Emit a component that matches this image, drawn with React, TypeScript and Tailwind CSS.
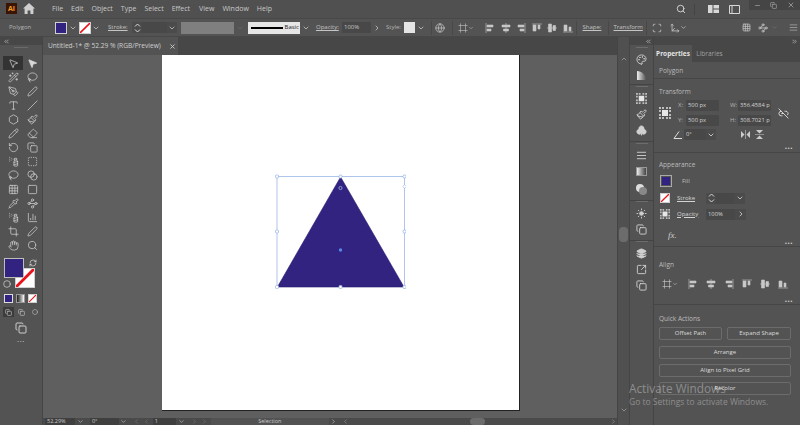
import {
  ChevronDown, ChevronRight, ChevronLeft, ChevronUp, ChevronsLeft, ChevronsRight, Search, X, Minus,
  MousePointer2, WandSparkles, Lasso, PenTool, Pen, Type, Slash, Hexagon, Paintbrush, Pencil, Eraser,
  RotateCcw, Copy, SprayCan, Grid3x3, Pipette, Blend, ChartColumn, Crop, Hand, Palette, Club, Sun,
  Layers, SquareArrowOutUpRight, Link2Off, Globe, Square, Waypoints, BoxSelect, Scan, Move3d, Frame,
  AlignJustify, Circle, RefreshCw,
} from "lucide-react"
import type { ReactNode } from "react"

const font = "font-['Open_Sans',sans-serif]"

function AlignIcons({ gap }: { gap: string }) {
  const bars = [
    <path key="a" d="M2 1v10M3 3h6v2H3zM3 7h4v2H3z" />,
    <path key="b" d="M6 1v10M2 3h8v2H2zM3.5 7h5v2h-5z" />,
    <path key="c" d="M10 1v10M3 3h6v2H3zM5 7h4v2H5z" />,
    <path key="d" d="M1 2h10M2 3h3v6H2zM7 3h2v4H7z" />,
    <path key="e" d="M1 6h10M2.5 2h3v8h-3zM7 3.5h2.5v5H7z" />,
    <path key="f" d="M1 10h10M2 3h3v6H2zM7 5h2v4H7z" />,
  ]
  return (
    <div className={`flex items-center ${gap}`}>
      {bars.map((b) => (
        <svg key={b.key} width="12" height="12" viewBox="0 0 12 12" fill="#c8c8c8" stroke="#c8c8c8" strokeWidth="0.6">{b}</svg>
      ))}
    </div>
  )
}

function Swatch({ none, size = "w-3 h-3" }: { none?: boolean; size?: string }) {
  return (
    <div className={`${size} shrink-0 border border-[#cfcfcf] ${none ? "bg-white" : "bg-[#31237f]"} relative overflow-hidden`}>
      {none && (
        <svg className="w-full h-full" viewBox="0 0 10 10">
          <path d="M0 10L10 0" stroke="#e8141c" strokeWidth="1.6" />
        </svg>
      )}
    </div>
  )
}

function Stepper() {
  return (
    <div className="w-[10px] h-[11px] flex items-center justify-center bg-[#4b4b4b] rounded-l-[1px]">
      <svg width="7" height="10" viewBox="0 0 7 10" fill="none" stroke="#d8d8d8"><path d="M1 3.5L3.5 1 6 3.5M1 6.5L3.5 9 6 6.5" /></svg>
    </div>
  )
}

function RefPoint({ size }: { size: number }) {
  return (
    <svg width={size} height={size} viewBox="0 0 12 12" className="shrink-0" fill="#bdbdbd">
      <path d="M0 0h2v2H0zM3 0h2v2H3zM7 0h2v2H7zM10 0h2v2h-2zM0 3h2v2H0zM10 3h2v2h-2zM0 7h2v2H0zM10 7h2v2h-2zM0 10h2v2H0zM3 10h2v2H3zM7 10h2v2H7zM10 10h2v2h-2z" />
      <path d="M3 3h6v6H3z" fill="#e8e8e8" />
    </svg>
  )
}

function MenuBar() {
  const items = [["File", "ml-[52px]"], ["Edit", "ml-[8px]"], ["Object", "ml-[8px]"], ["Type", "ml-[8px]"], ["Select", "ml-[8px]"], ["Effect", "ml-[8px]"], ["View", "ml-[9px]"], ["Window", "ml-[8px]"], ["Help", "ml-[8px]"]]
  return (
    <div className="h-[18px] shrink-0 bg-[#505050] flex items-center relative text-[#c8c8c8] text-[7px]">
      <div className="absolute left-[6px] top-[3px] w-[11px] h-[11px] bg-[#3a1505] text-[#f59a2c] text-[7px] font-bold flex items-center justify-center leading-none">Ai</div>
      <svg className="absolute left-[23px] top-[3px]" width="12" height="11" viewBox="0 0 12 11" fill="#cfcfcf"><path d="M6 0L0 5.5h1.6V11h3V7.5h2.8V11h3V5.5H12z" /></svg>
      {items.map(([t, c]) => <span key={t} className={c}>{t}</span>)}
      <div className="ml-auto flex items-center self-stretch">
        <Search size={10} className="text-[#d8d8d8] mr-[8px]" strokeWidth={2.2} />
        <div className="w-px h-[11px] bg-[#444] mr-[13px]" />
        <svg className="mr-[10px]" width="11" height="8" viewBox="0 0 11 8" fill="#d8d8d8"><path d="M0 0h4.5v8H0zM5.5 0H11v3.5H5.5zM5.5 4.5H11V8H5.5z" /></svg>
        <svg className="mr-[9px]" width="11" height="9" viewBox="0 0 11 9" fill="none" stroke="#d8d8d8"><path d="M.5.5h10v8H.5zM3 .5v8" /></svg>
        <div className="self-start h-[10px] w-[51px] bg-[#454545] flex items-center justify-around text-[#b4b4b4]">
          <Minus size={7} />
          <Copy size={7} />
          <X size={8} />
        </div>
      </div>
    </div>
  )
}

function ControlBar() {
  return (
    <div className="h-[19px] shrink-0 bg-[#535353] border-y border-[#484848] flex items-center text-[#c4c4c4] text-[6px] relative">
      <span className="ml-[9px] w-[46px] text-[#b4b4b4]">Polygon</span>
      <Swatch />
      <ChevronDown size={8} strokeWidth={2.4} className="ml-[2px]" />
      <div className="ml-[2px]"><Swatch none /></div>
      <ChevronDown size={8} strokeWidth={2.4} className="ml-[1px]" />
      <span className="ml-[8px] w-[20px] underline">Stroke:</span>
      <div className="ml-[4px]"><Stepper /></div>
      <div className="w-[25px] h-[11px] bg-[#484848]" />
      <div className="w-[10px] h-[11px] bg-[#4b4b4b] flex items-center justify-center"><ChevronDown size={8} strokeWidth={2.4} /></div>
      <div className="ml-[4px] w-[53px] h-[12px] bg-[#7f7f7f]" />
      <ChevronDown size={8} className="ml-[2px] text-[#6d6d6d]" />
      <div className="ml-[4px] w-[52px] h-[12px] bg-[#e6e6e6] flex items-center text-[#222] pr-[1px]">
        <div className="flex-1 h-[2px] bg-black ml-[3px] mr-[2px]" />
        <span>Basic</span>
      </div>
      <ChevronDown size={8} strokeWidth={2.4} className="ml-[2px]" />
      <span className="ml-[6px] underline w-[26px]">Opacity:</span>
      <div className="w-[29px] h-[11px] bg-[#484848] pl-[2px] leading-[11px]">100%</div>
      <ChevronRight size={8} strokeWidth={2.4} className="ml-[2px]" />
      <span className="ml-[5px] w-[18px] text-[#b4b4b4]">Style:</span>
      <div className="w-[11px] h-[11px] bg-[#e4e4e4]" />
      <ChevronDown size={8} strokeWidth={2.4} className="ml-[2px]" />
      <div className="w-px h-[14px] bg-[#484848] ml-[6px]" />
      <Globe size={10} className="ml-[3px] text-[#bbb]" />
      <div className="w-px h-[14px] bg-[#484848] ml-[7px]" />
      <Frame size={10} className="ml-[5px]" strokeWidth={1.4} />
      <ChevronDown size={6} className="mr-[10px]" />
      <AlignIcons gap="gap-[3.5px]" />
      <div className="w-px h-[14px] bg-[#484848] ml-[2px]" />
      <span className="ml-[6px] w-[20px] underline">Shape:</span>
      <div className="w-px h-[14px] bg-[#484848] ml-[5px]" />
      <span className="ml-[5px] w-[28px] underline">Transform</span>
      <div className="w-px h-[14px] bg-[#484848] ml-[4px]" />
      <Scan size={10} className="ml-[5px]" />
      <Move3d size={10} className="ml-[8px]" />
      <ChevronDown size={7} strokeWidth={2.4} />
      <Grid3x3 size={9} className="ml-[55px]" />
      <Waypoints size={10} className="ml-[7px]" />
      <ChevronDown size={7} className="ml-[3px] text-[#777]" />
      <AlignJustify size={9} className="ml-[11px] text-[#aaa]" />
    </div>
  )
}

const tools = [
  MousePointer2, MousePointer2, WandSparkles, Lasso, PenTool, Pen, Type, Slash, Hexagon, Paintbrush,
  Pencil, Eraser, RotateCcw, Copy, SprayCan, BoxSelect, Lasso, Blend, Grid3x3, Square, Pipette, Waypoints,
  SprayCan, ChartColumn, Crop, Pen, Hand, Search,
]

function Toolbar() {
  return (
    <div className="w-[43px] shrink-0 bg-[#535353] border-r border-[#444] flex flex-col">
      <div className="h-[8px] bg-[#474747] flex items-center pl-[3px] text-[#cfcfcf]"><ChevronsLeft size={7} /></div>
      <div className="h-px w-[14px] bg-[#6a6a6a] mx-auto mt-[2px] mb-[8px]" />
      <div className="grid grid-cols-[20px_18px] auto-rows-[14px] ml-[3px] text-[#d0d0d0]">
        {tools.map((T, i) => (
          <div key={i} className={`flex items-center justify-center ${i === 0 ? "bg-[#333]" : ""}`}>
            <T size={11} strokeWidth={1.6} fill={i === 1 ? "#d8d8d8" : "none"} />
          </div>
        ))}
      </div>
      <div className="relative h-[34px] mt-[4px] mb-[4px] shrink-0">
        <div className="absolute left-[15px] top-[12px]">
          <Swatch none size="w-[20px] h-[20px]" />
        </div>
        <div className="absolute left-[4px] top-[2px] w-[20px] h-[20px] bg-[#31237f] border border-[#bdbdbd]" />
        <RefreshCw size={8} className="absolute left-[29px] top-[3px] text-[#ddd]" />
        <Circle size={8} className="absolute left-[3px] top-[24px] text-[#ddd]" />
      </div>
      <div className="flex gap-[3px] ml-[4px]">
        <div className="w-[9px] h-[9px] bg-[#31237f] border border-[#ddd]" />
        <div className="w-[9px] h-[9px] bg-gradient-to-r from-[#222] to-white border border-[#999]" />
        <Swatch none size="w-[9px] h-[9px]" />
      </div>
      <div className="flex gap-[2px] ml-[3px] mt-[4px] text-[#ccc]">
        <div className="w-[11px] h-[10px] bg-[#3c3c3c] flex items-center justify-center"><Copy size={7} /></div>
        <div className="w-[11px] h-[10px] flex items-center justify-center"><Copy size={7} /></div>
        <div className="w-[11px] h-[10px] flex items-center justify-center"><Circle size={6} /></div>
      </div>
      <Copy size={12} className="mx-auto mt-[5px] text-[#cfcfcf]" />
      <div className="text-[#cfcfcf] text-[8px] leading-none text-center mt-[1px] tracking-[0.5px]">...</div>
    </div>
  )
}

function Handle({ x, y }: { x: number; y: number }) {
  return <rect x={x - 1.5} y={y - 1.5} width="3" height="3" fill="white" stroke="#9db7e6" strokeWidth="0.8" rx="1" />
}

function Canvas() {
  return (
    <div className="flex-1 min-w-0 flex flex-col bg-[#5f5f5f]">
      <div className="h-[18px] shrink-0 bg-[#474747] flex items-end">
        <div className="ml-0 w-[135px] h-[18px] bg-[#535353] flex items-center text-[#d0d0d0] text-[6.6px] pl-[5px]">
          <span>Untitled-1* @ 52.29 % (RGB/Preview)</span>
          <X size={7} strokeWidth={3} className="ml-auto mr-[2px]" />
        </div>
      </div>
      <div className="flex-1 min-h-0">
        <div className="ml-[119px] w-[358px] h-[356px] bg-white border-r border-b border-[#222] pt-[116px] pl-[108px]">
          <svg width="136" height="122" viewBox="270 171 136 122" className="block">
            <rect x="277" y="176.5" width="127.5" height="110" fill="none" stroke="#9db7e6" strokeWidth="0.8" />
            <path d="M340.6 177L404 287H277.4Z" fill="#31237f" stroke="#241a70" strokeWidth="0.6" />
            <circle cx="340.5" cy="188" r="1.6" fill="#31237f" stroke="#9db7e6" strokeWidth="0.8" />
            <circle cx="340.5" cy="250" r="1.7" fill="#5a86e8" />
            <path d="M404.5 184.5l1.7 2-1.7 2-1.7-2z" fill="white" stroke="#9db7e6" strokeWidth="0.6" />
            <Handle x={277} y={176.5} />
            <Handle x={340.5} y={176.5} />
            <Handle x={404.5} y={176.5} />
            <Handle x={277} y={231.5} />
            <Handle x={404.5} y={231.5} />
            <Handle x={277} y={287} />
            <Handle x={340.5} y={287} />
            <Handle x={404.5} y={287} />
          </svg>
        </div>
      </div>
      <StatusBar />
    </div>
  )
}

function StatusBar() {
  return (
    <div className="h-[7px] shrink-0 bg-[#4a4a4a] flex items-start text-[#c8c8c8] text-[5.5px] leading-[7px] overflow-hidden">
      <div className="ml-[2px] w-[30px] h-[7px] bg-[#3f3f3f] pl-[2px]">52.29%</div>
      <ChevronDown size={7} className="ml-[2px]" />
      <div className="ml-[6px] w-[29px] h-[7px] bg-[#3f3f3f] pl-[2px]">0°</div>
      <ChevronDown size={7} className="ml-[1px]" />
      <ChevronLeft size={7} className="ml-[6px] text-[#777]" />
      <ChevronLeft size={7} className="ml-[3px] text-[#777]" />
      <div className="ml-[3px] w-[23px] h-[7px] bg-[#3f3f3f] pl-[2px]">1</div>
      <ChevronDown size={7} className="ml-[2px]" />
      <ChevronRight size={7} className="ml-[6px] text-[#777]" />
      <ChevronRight size={7} className="ml-[3px] text-[#777]" />
      <div className="ml-[3px] w-[119px] text-center bg-[#525252] h-[7px]">Selection</div>
      <ChevronRight size={7} className="ml-[1px]" />
      <ChevronLeft size={7} className="ml-[5px] text-[#999]" />
      <div className="ml-[121px] w-[15px] h-[7px] bg-[#6c6c6c] rounded-[4px]" />
      <ChevronRight size={7} className="ml-[125px] text-[#999]" />
    </div>
  )
}

function VScroll() {
  return (
    <div className="w-[13px] shrink-0 bg-[#505050] border-x border-[#444] flex flex-col items-center text-[#aaa]">
      <ChevronUp size={8} className="mt-[18px]" />
      <div className="mt-[164px] w-[9px] h-[15px] bg-[#6c6c6c] rounded-[4px]" />
      <ChevronDown size={8} className="mt-[164px]" />
    </div>
  )
}

function DockGroup({ children, end, pad }: { children: ReactNode; end?: boolean; pad: string }) {
  return (
    <div className={`flex flex-col items-center gap-[5px] ${pad} text-[#d0d0d0] ${end ? "" : "border-b border-[#444]"}`}>
      <div className="w-[12px] h-px bg-[#6d6d6d] mb-[1px]" />
      {children}
    </div>
  )
}

function Dock() {
  return (
    <div className="w-[24px] shrink-0 bg-[#535353] border-r border-[#444] flex flex-col">
      <div className="h-[8px] shrink-0 bg-[#474747] flex items-center justify-end pr-[1px] text-[#cfcfcf]"><ChevronsLeft size={7} /></div>
      <DockGroup pad="pt-[2px] pb-[3px]">
        <Palette size={11} />
        <svg width="11" height="11" viewBox="0 0 11 11"><defs><linearGradient id="g1"><stop stopColor="#eee" /><stop offset="1" stopColor="#555" /></linearGradient></defs><path d="M1 1c5 0 9 4 9 9H1z" fill="url(#g1)" /></svg>
      </DockGroup>
      <DockGroup pad="pt-[1px] pb-[5px]">
        <RefPoint size={11} />
        <Paintbrush size={11} />
        <Club size={11} fill="#d0d0d0" />
      </DockGroup>
      <DockGroup pad="pt-[1px] pb-[5px]">
        <AlignJustify size={11} />
        <div className="w-[11px] h-[9px] mt-[1px] mb-[3px] bg-gradient-to-r from-[#eee] to-[#444] border border-[#999]" />
        <div className="relative w-[11px] h-[11px]">
          <div className="absolute left-0 top-0 w-[8px] h-[8px] rounded-full bg-[#ddd]" />
          <div className="absolute right-0 bottom-0 w-[8px] h-[8px] rounded-full bg-[#888]" />
        </div>
      </DockGroup>
      <DockGroup pad="pb-[5px]">
        <Sun size={11} fill="#d0d0d0" />
        <Copy size={11} />
      </DockGroup>
      <DockGroup end pad="">
        <Layers size={11} fill="#d0d0d0" />
        <SquareArrowOutUpRight size={11} />
        <Copy size={11} />
      </DockGroup>
    </div>
  )
}

function Field({ w, children }: { w: string; children?: ReactNode }) {
  return <div className={`${w} h-[11px] bg-[#484848] rounded-[1px] pl-[2px] leading-[11px] text-[5.8px] text-[#d4d4d4] overflow-hidden whitespace-nowrap`}>{children}</div>
}

function Section({ title, children, last }: { title: string; children?: ReactNode; last?: boolean }) {
  return (
    <div className={`px-[5px] ${last ? "" : "border-b border-[#464646]"}`}>
      <div className="text-[6.5px] leading-[10px] text-[#bcbcbc]">{title}</div>
      {children}
    </div>
  )
}

function More() {
  return <div className="text-right text-[#d4d4d4] text-[8px] leading-none tracking-[0.5px] pr-[2px] font-bold">...</div>
}

function ActionBtn({ children, className = "" }: { children: ReactNode; className?: string }) {
  return <div className={`h-[13px] border border-[#6c6c6c] rounded-[2px] flex items-center justify-center text-[6px] text-[#dcdcdc] ${className}`}>{children}</div>
}

function Panel() {
  return (
    <div className="w-[146px] shrink-0 bg-[#535353] flex flex-col overflow-hidden">
      <div className="h-[8px] shrink-0 bg-[#474747] flex items-center justify-end pr-[2px] text-[#cfcfcf]"><ChevronsRight size={7} /></div>
      <div className="h-[17px] shrink-0 bg-[#474747] flex items-center text-[6.5px]">
        <div className="w-[38px] h-full bg-[#535353] flex items-center justify-center text-[#e4e4e4] font-bold">Properties</div>
        <div className="w-[35px] text-center text-[#a0a0a0]">Libraries</div>
      </div>
      <div className="pt-[4px] pb-[4px]"><Section title="Polygon"><div className="h-[2px]" /></Section></div>
      <div className="pt-[4px]">
        <Section title="Transform">
          <div className="flex mt-[3px] text-[6px] text-[#b4b4b4]">
            <div className="mt-[7px]"><RefPoint size={12} /></div>
            <div className="ml-[7px] flex flex-col gap-[4px]">
              <div className="flex items-center gap-[2px]"><span className="w-[6px]">X:</span><Field w="w-[33px]">500 px</Field></div>
              <div className="flex items-center gap-[2px]"><span className="w-[6px]">Y:</span><Field w="w-[33px]">500 px</Field></div>
            </div>
            <div className="ml-[11px] flex flex-col gap-[4px]">
              <div className="flex items-center gap-[1px]"><span className="w-[7px]">W:</span><Field w="w-[33px]">356.4584 p</Field></div>
              <div className="flex items-center gap-[1px]"><span className="w-[7px]">H:</span><Field w="w-[33px]">308.7021 p</Field></div>
            </div>
            <Link2Off size={11} className="ml-[7px] mt-[8px] text-[#ddd] shrink-0" />
          </div>
          <div className="flex items-center mt-[3px] text-[#ddd]">
            <svg className="ml-[14px]" width="9" height="8" viewBox="0 0 9 8" fill="none" stroke="#ddd"><path d="M6 .5L1 7.5h8" /></svg>
            <div className="ml-[2px] flex"><Field w="w-[22px]">0°</Field><div className="w-[10px] h-[11px] bg-[#4b4b4b] flex items-center justify-center"><ChevronDown size={8} strokeWidth={2.4} /></div></div>
            <svg className="ml-[25px]" width="9" height="9" viewBox="0 0 9 9" fill="#ccc"><path d="M0 1l3.5 3.5L0 8zM9 1L5.5 4.5 9 8zM4.2 0h.6v9h-.6z" /></svg>
            <svg className="ml-[5px]" width="9" height="9" viewBox="0 0 9 9" fill="#ccc"><path d="M1 0l3.5 3.5L8 0zM1 9l3.5-3.5L8 9zM0 4.2h9v.6H0z" /></svg>
          </div>
          <div className="mt-[2px]"><More /></div>
          <div className="h-[2px]" />
        </Section>
      </div>
      <div className="pt-[7px]">
        <Section title="Appearance">
          <div className="flex items-center mt-[4px] h-[14px] text-[6px] text-[#c0c0c0]">
            <div className="p-[1px] border border-[#aaa] ml-[1px]"><div className="w-[8px] h-[8px] bg-[#31237f]" /></div>
            <span className="ml-[10px]">Fill</span>
          </div>
          <div className="flex items-center mt-[4px] h-[12px] text-[6px] text-[#d4d4d4]">
            <div className="ml-[1px]"><Swatch none size="w-[10px] h-[10px]" /></div>
            <span className="ml-[7px] w-[29px] underline">Stroke</span>
            <Stepper />
            <div className="w-[18px] h-[11px] bg-[#484848]" />
            <div className="w-[11px] h-[11px] bg-[#4b4b4b] flex items-center justify-center"><ChevronDown size={8} strokeWidth={2.4} /></div>
          </div>
          <div className="flex items-center mt-[4px] h-[12px] text-[6px] text-[#d4d4d4]">
            <div className="ml-[1px]"><RefPoint size={10} /></div>
            <span className="ml-[7px] w-[29px] underline">Opacity</span>
            <Field w="w-[29px]">100%</Field>
            <div className="w-[11px] h-[11px] bg-[#4b4b4b] flex items-center justify-center"><ChevronRight size={8} strokeWidth={2.4} /></div>
          </div>
          <div className="italic font-['Liberation_Serif',serif] text-[#d0d0d0] text-[9px] leading-[10px] mt-[10px] ml-[9px]">fx.</div>
          <div className="-mt-[3px]"><More /></div>
          <div className="h-[1px]" />
        </Section>
      </div>
      <div className="pt-[13px]">
        <Section title="Align">
          <div className="flex items-center mt-[8px] mb-[5px] ml-[3px]">
            <Frame size={10} className="text-[#cfcfcf]" strokeWidth={1.4} />
            <ChevronDown size={6} className="text-[#cfcfcf] mr-[9px]" />
            <AlignIcons gap="gap-[6px]" />
          </div>
          <More />
          <div className="h-[1px]" />
        </Section>
      </div>
      <div className="pt-[9px]">
        <Section title="Quick Actions" last>
          <div className="mt-[3px] flex flex-col gap-[5px] pb-[4px]">
            <div className="flex gap-[5px]">
              <ActionBtn className="w-[63px]">Offset Path</ActionBtn>
              <ActionBtn className="w-[64px]">Expand Shape</ActionBtn>
            </div>
            <ActionBtn className="w-[132px] mt-[1px]">Arrange</ActionBtn>
            <ActionBtn className="w-[132px]">Align to Pixel Grid</ActionBtn>
            <ActionBtn className="w-[132px]">Recolor</ActionBtn>
          </div>
        </Section>
      </div>
    </div>
  )
}

export default function App() {
  return (
    <div className={`w-[800px] h-[425px] overflow-hidden flex flex-col bg-[#535353] relative ${font}`}>
      <MenuBar />
      <ControlBar />
      <div className="flex-1 min-h-0 flex">
        <Toolbar />
        <Canvas />
        <VScroll />
        <Dock />
        <Panel />
      </div>
      <div className="absolute left-[629px] top-[380px] text-white/35 pointer-events-none">
        <div className="text-[11.8px] leading-[16px]">Activate Windows</div>
        <div className="text-[8.5px] leading-[11px]">Go to Settings to activate Windows.</div>
      </div>
    </div>
  )
}
